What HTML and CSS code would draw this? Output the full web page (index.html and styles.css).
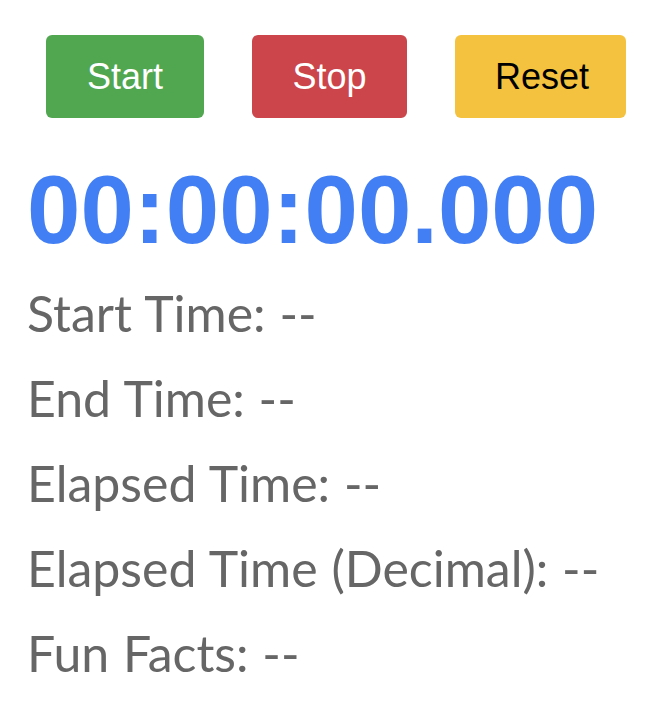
FILE: index.html
```html
<!DOCTYPE html>
<html>
<head>
<meta charset="utf-8">
<link rel="stylesheet" href="styles.css">
</head>
<body>
<div class="page">
  <div class="buttons">
    <button class="btn btn-start">Start</button>
    <button class="btn btn-stop">Stop</button>
    <button class="btn btn-reset">Reset</button>
  </div>
  <div class="timer">00:00:00.000</div>
  <div class="info">
    <p class="line">Start Time: --</p>
    <p class="line">End Time: --</p>
    <p class="line">Elapsed Time: --</p>
    <p class="line">Elapsed Time (Decimal): --</p>
    <p class="line">Fun Facts: --</p>
  </div>
</div>
</body>
</html>
```
FILE: styles.css
```css
html, body {
  margin: 0;
  padding: 0;
  background: #ffffff;
}
.page {
  padding: 35px 0 0 27px;
}
.buttons {
  display: flex;
  gap: 48px;
  margin-left: 19px;
}
.btn {
  font-family: "Liberation Sans", Arial, sans-serif;
  font-size: 36px;
  height: 83px;
  border: none;
  border-radius: 6px;
  padding: 0 40px;
  color: #ffffff;
}
.btn-start { background: #51a650; width: 158px; }
.btn-stop { background: #cb454a; width: 155px; }
.btn-reset { background: #f4c23f; color: #000000; width: 171px; }
.timer {
  font-family: "Liberation Sans", Arial, sans-serif;
  font-weight: bold;
  font-size: 96px;
  line-height: 110px;
  color: #427ff5;
  margin-top: 37px;
}
.info {
  font-family: Lato, sans-serif;
  color: #666666;
  font-size: 50px;
  margin-top: 6px;
}
.line {
  margin: 0;
  line-height: 85px;
  word-spacing: 1px;
}
```
